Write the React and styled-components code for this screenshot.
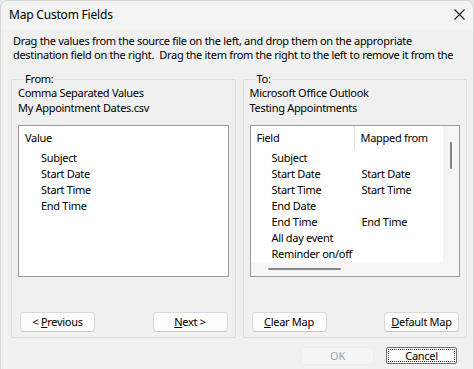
import React from 'react';
import styled, { createGlobalStyle } from 'styled-components';

const GlobalStyle = createGlobalStyle`
  html, body {
    margin: 0;
    padding: 0;
    background: #e9e9e9;
  }
  body {
    font-family: 'Noto Sans', 'Open Sans', sans-serif;
    font-size: 11px;
    letter-spacing: -0.3px;
    color: #000;
  }
`;

const Window = styled.div`
  width: 474px;
  height: 369px;
  box-sizing: border-box;
  background: #f0f0f0;
  border-radius: 8px 8px 0 0;
  border: 1px solid #d6d6d6;
  border-bottom: none;
  display: flex;
  flex-direction: column;
  overflow: hidden;
`;

const TitleBar = styled.div`
  height: 29px;
  display: flex;
  align-items: center;
  justify-content: space-between;
  padding: 0 6px 0 8px;
  background: #f3f3f3;
`;

const Title = styled.div`
  font-size: 12px;
  letter-spacing: -0.2px;
  padding-bottom: 3px;
`;

const CloseButton = styled.div`
  width: 14px;
  height: 14px;
  display: flex;
  align-items: center;
  justify-content: center;
  margin: 0 1px 2px 0;
`;

const Body = styled.div`
  flex: 1;
  display: flex;
  flex-direction: column;
  padding: 4px 6px 0 10px;
`;

const Instructions = styled.div`
  line-height: 14px;
  padding-left: 2px;
  width: 446px;
  overflow: hidden;
  white-space: nowrap;
`;

const Groups = styled.div`
  display: flex;
  gap: 7px;
  margin-top: 11px;
`;

const Group = styled.fieldset`
  flex: 1;
  min-width: 0;
  margin: 0;
  padding: 0 6px 5px;
  border: 1px solid #dcdcdc;
  border-radius: 2px;
  display: flex;
  flex-direction: column;
`;

const Legend = styled.legend`
  padding: 0 1px;
  margin-left: 6px;
  line-height: 12px;
`;

const Source = styled.div`
  line-height: 15px;
  white-space: nowrap;
`;

const ListBox = styled.div`
  margin-top: 10px;
  height: 152px;
  box-sizing: border-box;
  background: #fff;
  border: 1px solid #999;
  overflow: hidden;
`;

const HeaderRow = styled.div`
  display: flex;
  height: 23px;
  align-items: center;
`;

const HeaderCell = styled.div`
  width: ${(p) => p.width || 'auto'};
  padding-left: 6px;
  height: 23px;
  line-height: 23px;
  box-sizing: border-box;
  border-right: ${(p) => (p.divider ? '1px solid #e5e5e5' : 'none')};
`;

const Rows = styled.div`
  padding-top: 1px;
`;

const Row = styled.div`
  display: flex;
  height: 16px;
  line-height: 16px;
  white-space: nowrap;
`;

const Cell = styled.div`
  width: ${(p) => p.width || 'auto'};
  padding-left: ${(p) => p.indent || 0}px;
  box-sizing: border-box;
`;

const ScrollArea = styled.div`
  display: flex;
  height: 100%;
`;

const ScrollContent = styled.div`
  flex: 1;
  display: flex;
  flex-direction: column;
  overflow: hidden;
`;

const VScroll = styled.div`
  width: 16px;
  background: #f6f6f6;
  display: flex;
  justify-content: center;
  padding-top: 16px;
  box-sizing: border-box;
`;

const VThumb = styled.div`
  width: 2px;
  height: 27px;
  border-radius: 1px;
  background: #858585;
`;

const HScroll = styled.div`
  height: 16px;
  margin-top: auto;
  background: #f6f6f6;
  display: flex;
  align-items: center;
  padding-left: 17px;
`;

const HThumb = styled.div`
  width: 73px;
  height: 2px;
  border-radius: 1px;
  background: #858585;
`;

const GroupButtons = styled.div`
  display: flex;
  justify-content: space-between;
  margin-top: 35px;
  padding: 0 1px 0 2px;
`;

const Button = styled.button`
  font-family: inherit;
  font-size: 11px;
  letter-spacing: -0.3px;
  width: ${(p) => p.width || 75}px;
  height: ${(p) => p.height || 20}px;
  padding: 0;
  background: ${(p) => (p.disabled ? '#f5f5f5' : '#fdfdfd')};
  color: ${(p) => (p.disabled ? '#a3a3a3' : '#000')};
  border: 1px solid ${(p) => (p.focused ? '#6e6e6e' : p.disabled ? '#ececec' : '#d8d8d8')};
  border-bottom-color: ${(p) => (p.focused ? '#6e6e6e' : p.disabled ? '#ececec' : '#c6c6c6')};
  border-radius: ${(p) => (p.focused ? 2 : 4)}px;
  outline: ${(p) => (p.focused ? '1px dotted #444' : 'none')};
  outline-offset: -3px;
  box-sizing: border-box;
  line-height: 16px;
`;

const Footer = styled.div`
  display: flex;
  justify-content: flex-end;
  gap: 12px;
  margin-top: 9px;
  padding-right: 10px;
`;

const underline = (text, idx) => (
  <>
    {text.slice(0, idx)}
    <u>{text[idx]}</u>
    {text.slice(idx + 1)}
  </>
);

const sourceFields = ['Subject', 'Start Date', 'Start Time', 'End Time'];

const mappings = [
  ['Subject', ''],
  ['Start Date', 'Start Date'],
  ['Start Time', 'Start Time'],
  ['End Date', ''],
  ['End Time', 'End Time'],
  ['All day event', ''],
  ['Reminder on/off', ''],
];

export default function App() {
  return (
    <>
      <GlobalStyle />
      <Window>
        <TitleBar>
          <Title>Map Custom Fields</Title>
          <CloseButton>
            <svg width="11" height="11" viewBox="0 0 11 11">
              <path d="M0.5 0.5 L10.5 10.5 M10.5 0.5 L0.5 10.5" stroke="#1a1a1a" strokeWidth="1.1" />
            </svg>
          </CloseButton>
        </TitleBar>
        <Body>
          <Instructions>
            <div>Drag the values from the source file on the left, and drop them on the appropriate</div>
            <div>destination field on the right.&nbsp; Drag the item from the right to the left to remove it from the</div>
          </Instructions>
          <Groups>
            <Group>
              <Legend>From:</Legend>
              <Source>Comma Separated Values</Source>
              <Source>My Appointment Dates.csv</Source>
              <ListBox>
                <HeaderRow>
                  <HeaderCell>Value</HeaderCell>
                </HeaderRow>
                <Rows>
                  {sourceFields.map((f) => (
                    <Row key={f}>
                      <Cell indent={22}>{f}</Cell>
                    </Row>
                  ))}
                </Rows>
              </ListBox>
              <GroupButtons>
                <Button>&lt; {underline('Previous', 0)}</Button>
                <Button>{underline('Next', 0)} &gt;</Button>
              </GroupButtons>
            </Group>
            <Group>
              <Legend>To:</Legend>
              <Source>Microsoft Office Outlook</Source>
              <Source>Testing Appointments</Source>
              <ListBox>
                <ScrollArea>
                  <ScrollContent>
                    <HeaderRow>
                      <HeaderCell width="104px" divider>
                        Field
                      </HeaderCell>
                      <HeaderCell>Mapped from</HeaderCell>
                    </HeaderRow>
                    <Rows>
                      {mappings.map(([field, from]) => (
                        <Row key={field}>
                          <Cell width="104px" indent={21}>
                            {field}
                          </Cell>
                          <Cell indent={7}>{from}</Cell>
                        </Row>
                      ))}
                    </Rows>
                    <HScroll>
                      <HThumb />
                    </HScroll>
                  </ScrollContent>
                  <VScroll>
                    <VThumb />
                  </VScroll>
                </ScrollArea>
              </ListBox>
              <GroupButtons>
                <Button>{underline('Clear Map', 0)}</Button>
                <Button>{underline('Default Map', 0)}</Button>
              </GroupButtons>
            </Group>
          </Groups>
          <Footer>
            <Button width={73} height={18} disabled>
              OK
            </Button>
            <Button width={71} height={17} focused>
              Cancel
            </Button>
          </Footer>
        </Body>
      </Window>
    </>
  );
}
